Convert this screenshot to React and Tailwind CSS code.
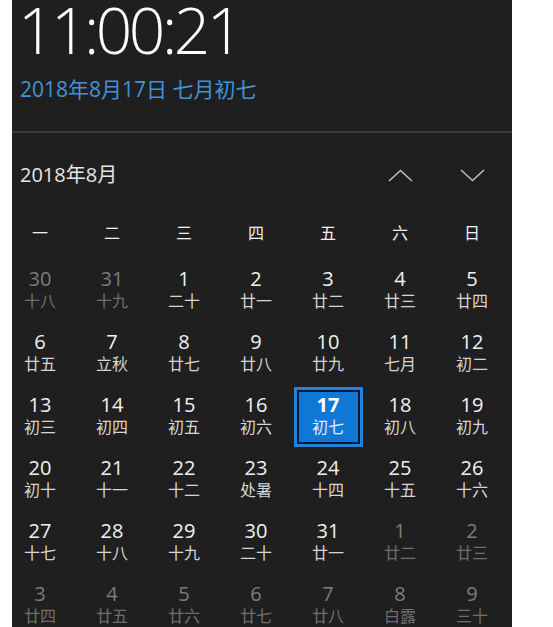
import React from "react";

const FONT = { fontFamily: '"Open Sans", "Noto Sans CJK SC", sans-serif' };

const weekdays = ["一", "二", "三", "四", "五", "六", "日"];

// [day, lunar, inMonth]
const days = [
  [30, "十八", false], [31, "十九", false], [1, "二十", true], [2, "廿一", true], [3, "廿二", true], [4, "廿三", true], [5, "廿四", true],
  [6, "廿五", true], [7, "立秋", true], [8, "廿七", true], [9, "廿八", true], [10, "廿九", true], [11, "七月", true], [12, "初二", true],
  [13, "初三", true], [14, "初四", true], [15, "初五", true], [16, "初六", true], [17, "初七", true], [18, "初八", true], [19, "初九", true],
  [20, "初十", true], [21, "十一", true], [22, "十二", true], [23, "处暑", true], [24, "十四", true], [25, "十五", true], [26, "十六", true],
  [27, "十七", true], [28, "十八", true], [29, "十九", true], [30, "二十", true], [31, "廿一", true], [1, "廿二", false], [2, "廿三", false],
  [3, "廿四", false], [4, "廿五", false], [5, "廿六", false], [6, "廿七", false], [7, "廿八", false], [8, "白露", false], [9, "三十", false],
];

function Chevron({ up }) {
  return (
    <svg width="25" height="13" viewBox="0 0 25 13" fill="none">
      <polyline
        points={up ? "1,12 12.5,1.5 24,12" : "1,1 12.5,11.5 24,1"}
        stroke="#bdbdbd"
        strokeWidth="1.6"
      />
    </svg>
  );
}

function DayCell({ day, lunar, inMonth, selected }) {
  if (selected) {
    return (
      <div className="h-[63px] flex items-center justify-center">
        <div className="w-[69px] h-[60px] border-[3px] border-[#2483d6]">
          <div className="w-full h-full border-2 border-[#0a1838] bg-[#0f77d5] flex flex-col items-center justify-center">
            <span className="block text-[20px] leading-[22px] font-bold text-white">{day}</span>
            <span className="block text-[16px] leading-[23px] text-[#e8eef8]">{lunar}</span>
          </div>
        </div>
      </div>
    );
  }
  return (
    <div className="h-[63px] flex flex-col items-center justify-center">
      <span className={`block text-[20px] leading-[22px] ${inMonth ? "text-[#f2f2f2]" : "text-[#7c7c7c]"}`}>{day}</span>
      <span className={`block text-[16px] leading-[23px] ${inMonth ? "text-[#d6d6d6]" : "text-[#6f6f6f]"}`}>{lunar}</span>
    </div>
  );
}

export default function App() {
  return (
    <div className="w-[553px] h-[627px] bg-white overflow-hidden" style={FONT}>
      <div className="ml-[12px] w-[500px] h-[627px] bg-[#1f1f1f] overflow-hidden">
        <div className="h-[60px] flex items-center pl-[6px]">
          <span className="text-[64px] leading-none font-light text-white tracking-[-3.5px]">11:00:21</span>
        </div>
        <div className="h-[60px] flex items-center pl-[8px]">
          <span className="text-[21px] text-[#4193d9]">2018年8月17日 七月初七</span>
        </div>

        <div className="mt-[11px] h-[2px] bg-[#3a3a3a]" />

        <div className="h-[84px] flex items-center pl-[8px] pr-[4px]">
          <span className="text-[20px] text-[#e6e6e6]">2018年8月</span>
          <div className="flex-1" />
          <div className="w-[72px] flex justify-center"><Chevron up /></div>
          <div className="w-[72px] flex justify-center"><Chevron /></div>
        </div>

        <div className="-ml-[8px] grid grid-cols-[repeat(7,72px)]">
          {weekdays.map((w) => (
            <div key={w} className="h-[32px] flex items-center justify-center text-[16px] text-[#f0f0f0]">
              {w}
            </div>
          ))}
        </div>

        <div className="mt-[10px] -ml-[8px] grid grid-cols-[repeat(7,72px)]">
          {days.map(([d, l, m], i) => (
            <DayCell key={i} day={d} lunar={l} inMonth={m} selected={i === 18} />
          ))}
        </div>
      </div>
    </div>
  );
}
